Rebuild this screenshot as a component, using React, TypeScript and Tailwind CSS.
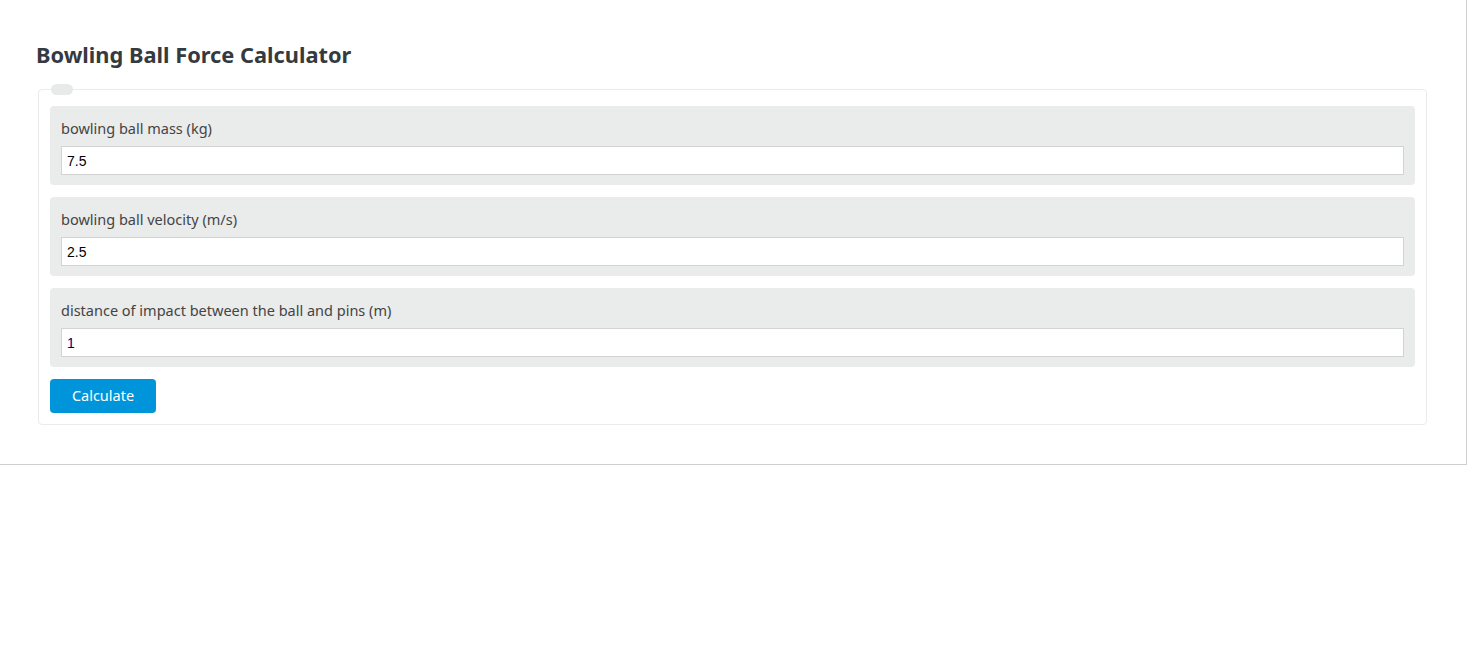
const fields = [
  { label: 'bowling ball mass (kg)', value: '7.5', tone: 'text-black' },
  { label: 'bowling ball velocity (m/s)', value: '2.5', tone: 'text-black' },
  { label: 'distance of impact between the ball and pins (m)', value: '1', tone: 'text-[#000066]' },
]

export default function App() {
  return (
    <div className="min-h-screen bg-white font-['Noto_Sans',sans-serif]">
      <div className="w-[1467px] border-r border-b border-[#cfcfcf] bg-white pt-[40px] pb-[39px] pl-[36px] pr-[39px]">
        <h1 className="text-[21.8px] font-bold leading-[30px] text-[#343a40]">Bowling Ball Force Calculator</h1>

        <fieldset className="relative mt-[14px] ml-[2px] rounded border border-[#ebebeb] px-[11px] pt-[11px] pb-[11px]">
          <legend className="ml-px h-[11px] w-[22px] rounded-full bg-[#e8e9e9]" />
          <div className="flex flex-col gap-[12px]">
            {fields.map((f) => (
              <div key={f.label} className="rounded bg-[#eaebeb] px-[11px] pt-[11px] pb-[10px]">
                <label className="mb-[6px] block text-[14.5px] leading-[23px] text-[#444]">{f.label}</label>
                <input
                  defaultValue={f.value}
                  className={`block h-[29px] w-full border border-[#d3d3d3] bg-white px-[5px] font-['Liberation_Sans',sans-serif] text-[14px] outline-none ${f.tone}`}
                />
              </div>
            ))}
          </div>
          <button className="mt-[12px] h-[34px] w-[106px] rounded bg-[#0095da] text-[14.5px] text-white">
            Calculate
          </button>
        </fieldset>
      </div>
    </div>
  )
}
